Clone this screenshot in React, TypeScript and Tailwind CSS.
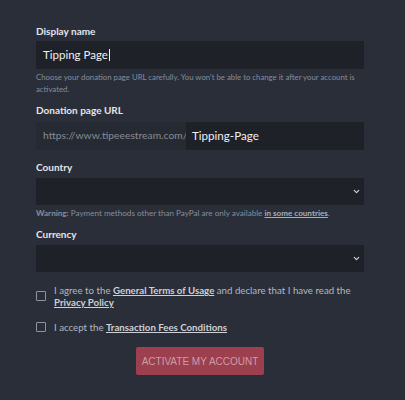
import { ChevronDown } from 'lucide-react';

function Label({ children, className = '' }: { children: React.ReactNode; className?: string }) {
  return <div className={`h-[16px] text-[10px] font-bold leading-[16px] text-[#e3e5e9] ${className}`}>{children}</div>;
}

function Select({ className = '' }: { className?: string }) {
  return (
    <div className={`flex h-[27px] items-center justify-end bg-[#1f2129] pr-[3px] ${className}`}>
      <ChevronDown className="h-[9px] w-[9px] text-[#d7dae0]" strokeWidth={3} />
    </div>
  );
}

function Check({ children, className = '' }: { children: React.ReactNode; className?: string }) {
  return (
    <label className={`flex items-center gap-[8px] ${className}`}>
      <span className="h-[10px] w-[10px] shrink-0 rounded-[1px] border-[1.5px] border-[#8e949f]" />
      <span className="text-[9.7px] leading-[12px] text-[#b4b8c0]">{children}</span>
    </label>
  );
}

export default function App() {
  return (
    <div className="h-[400px] w-full bg-[#2a2e39] px-[36px] pt-[23px] font-['Lato',sans-serif]">
      <div className="w-[328px]">
        <Label>Display name</Label>
        <div className="mt-[2px] flex h-[28px] items-center bg-[#1f2129] px-[7px] text-[11.5px] text-[#eef0f2]">
          Tipping Page
          <span className="ml-[1px] inline-block h-[12px] w-[1px] bg-[#eef0f2]" />
        </div>
        <p className="mt-[2px] text-[7.8px] leading-[12px] text-[#868d99]">
          Choose your donation page URL carefully. You won't be able to change it after your account is activated.
        </p>

        <Label className="mt-[7px]">Donation page URL</Label>
        <div className="mt-[4px] flex h-[28px]">
          <div className="flex w-[150px] items-center whitespace-nowrap bg-[#262a33] pl-[7px] text-[10.3px] text-[#858c98]">
            https://www.tipeeestream.com/
          </div>
          <div className="flex flex-1 items-center bg-[#1f2129] pl-[6px] text-[11.6px] text-[#eef0f2]">
            Tipping-Page
          </div>
        </div>

        <Label className="mt-[9px]">Country</Label>
        <Select className="mt-[3px]" />
        <p className="mt-[2px] whitespace-nowrap text-[8.1px] leading-[12px] text-[#868d99]">
          <span className="font-bold">Warning:</span> Payment methods other than PayPal are only available{' '}
          <a className="font-bold text-[#a7adb7] underline">in some countries</a>.
        </p>

        <Label className="mt-[7px]">Currency</Label>
        <Select className="mt-[3px]" />

        <Check className="mt-[12px]">
          I agree to the <a className="font-bold text-[#cdd0d6] underline">General Terms of Usage</a> and declare that I
          have read the <a className="font-bold text-[#cdd0d6] underline">Privacy Policy</a>
        </Check>
        <Check className="mt-[13px]">
          I accept the <a className="font-bold text-[#cdd0d6] underline">Transaction Fees Conditions</a>
        </Check>

        <div className="mt-[14px] flex justify-center">
          <button className="h-[28px] w-[128px] whitespace-nowrap rounded-[2px] bg-[#9c3f4f] font-['Liberation_Sans',sans-serif] text-[10px] uppercase text-[#cf9da6]">
            Activate my account
          </button>
        </div>
      </div>
    </div>
  );
}
